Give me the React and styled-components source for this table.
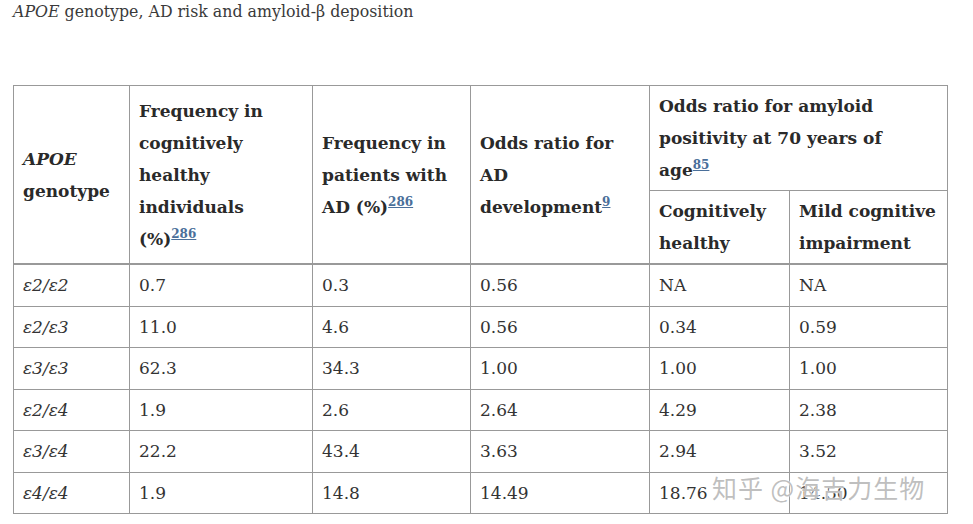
import React from "react";
import styled, { createGlobalStyle } from "styled-components";

const GlobalStyle = createGlobalStyle`
  html, body {
    margin: 0;
    padding: 0;
    background: #fff;
  }
`;

const rows = [
  ["ε2/ε2", "0.7", "0.3", "0.56", "NA", "NA"],
  ["ε2/ε3", "11.0", "4.6", "0.56", "0.34", "0.59"],
  ["ε3/ε3", "62.3", "34.3", "1.00", "1.00", "1.00"],
  ["ε2/ε4", "1.9", "2.6", "2.64", "4.29", "2.38"],
  ["ε3/ε4", "22.2", "43.4", "3.63", "2.94", "3.52"],
  ["ε4/ε4", "1.9", "14.8", "14.49", "18.76", "14.50"],
];

function App() {
  return (
    <Page>
      <GlobalStyle />
      <Caption>
        <i>APOE</i> genotype, AD risk and amyloid-β deposition
      </Caption>
      <Table>
        <colgroup>
          <col style={{ width: 116 }} />
          <col style={{ width: 183 }} />
          <col style={{ width: 158 }} />
          <col style={{ width: 179 }} />
          <col style={{ width: 140 }} />
          <col style={{ width: 158 }} />
        </colgroup>
        <thead>
          <tr>
            <Th rowSpan={2}>
              <i>APOE</i> genotype
            </Th>
            <Th rowSpan={2}>
              Frequency in cognitively healthy individuals (%)<Ref>286</Ref>
            </Th>
            <Th rowSpan={2}>
              Frequency in patients with AD (%)<Ref>286</Ref>
            </Th>
            <Th rowSpan={2}>
              Odds ratio for AD development<Ref>9</Ref>
            </Th>
            <Th colSpan={2}>
              Odds ratio for amyloid positivity at 70 years of age<Ref>85</Ref>
            </Th>
          </tr>
          <tr>
            <Th>Cognitively healthy</Th>
            <Th>Mild cognitive impairment</Th>
          </tr>
        </thead>
        <tbody>
          {rows.map((r) => (
            <tr key={r[0]}>
              {r.map((v, i) => (
                <Td key={i} $italic={i === 0}>
                  {v}
                </Td>
              ))}
            </tr>
          ))}
        </tbody>
      </Table>
      <Watermark>知乎 @海吉力生物</Watermark>
    </Page>
  );
}

const Page = styled.div`
  position: relative;
  width: 973px;
  height: 524px;
  padding: 2px 0 0 13px;
  box-sizing: border-box;
  font-family: "DejaVu Serif", "Liberation Serif", serif;
  color: #333;
`;

const Caption = styled.div`
  font-family: "DejaVu Serif", serif;
  font-size: 15.8px;
  line-height: 20px;
  color: #3a3a3a;
  margin-bottom: 63px;
`;

const Table = styled.table`
  border-collapse: collapse;
  table-layout: fixed;
  width: 935px;
  border: 1.5px solid #222;
  font-size: 17px;
`;

const Th = styled.th`
  text-align: left;
  font-weight: bold;
  color: #2a2a2a;
  line-height: 32px;
  padding: 4px 10px 4px 9px;
  border: 1px solid #999;
  vertical-align: middle;
  thead tr:last-child > &,
  thead tr:first-child > &[rowspan] {
    border-bottom: 2px solid #999;
  }
`;

const Ref = styled.sup`
  font-size: 12px;
  line-height: 0;
  color: #4a6f9a;
  text-decoration: underline;
  font-weight: bold;
  vertical-align: 7px;
`;

const Td = styled.td`
  padding: 5px 10px 5px 9px;
  line-height: 30.5px;
  border: 1px solid #999;
  color: #333;
  font-style: ${(p) => (p.$italic ? "italic" : "normal")};
`;

const Watermark = styled.div`
  position: absolute;
  left: 712px;
  top: 470px;
  font-family: "Noto Sans CJK SC", sans-serif;
  font-size: 25px;
  line-height: 34px;
  color: rgba(170, 170, 170, 0.75);
  text-shadow: 0 0 2px #fff, 0 0 1px #fff;
  letter-spacing: 1px;
  white-space: pre;
`;

export default App;
